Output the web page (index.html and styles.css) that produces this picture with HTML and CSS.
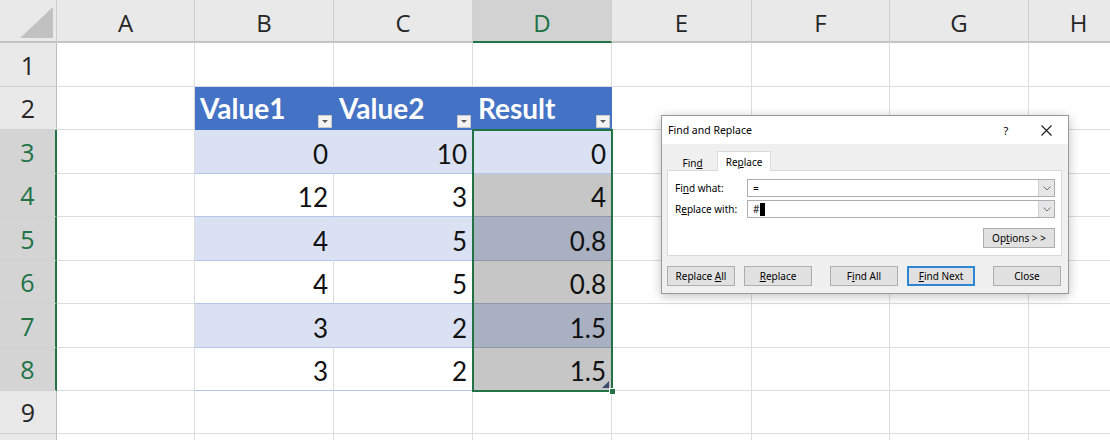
FILE: index.html
```html
<!DOCTYPE html>
<html lang="en">
<head>
    <meta charset="UTF-8">
    <title>Find and Replace</title>
    <link rel="stylesheet" href="styles.css">
</head>
<body>
<div class="sheet">
    <div class="grid">
        <!-- column headers -->
        <div class="ch corner"><span class="tri"></span></div>
        <div class="ch">A</div>
        <div class="ch">B</div>
        <div class="ch">C</div>
        <div class="ch sel">D</div>
        <div class="ch">E</div>
        <div class="ch">F</div>
        <div class="ch">G</div>
        <div class="ch">H</div>

        <!-- row 1 -->
        <div class="rh">1</div>
        <div></div><div></div><div></div><div></div><div></div><div></div><div></div><div></div>

        <!-- row 2: table header -->
        <div class="rh">2</div>
        <div></div>
        <div class="th">Value1<span class="flt"></span></div>
        <div class="th">Value2<span class="flt"></span></div>
        <div class="th">Result<span class="flt"></span></div>
        <div></div><div></div><div></div><div></div>

        <!-- row 3 -->
        <div class="rh sel">3</div>
        <div></div>
        <div class="num band">0</div>
        <div class="num band">10</div>
        <div class="num band">0</div>
        <div></div><div></div><div></div><div></div>

        <!-- row 4 -->
        <div class="rh sel">4</div>
        <div></div>
        <div class="num plain">12</div>
        <div class="num plain">3</div>
        <div class="num shade">4</div>
        <div></div><div></div><div></div><div></div>

        <!-- row 5 -->
        <div class="rh sel">5</div>
        <div></div>
        <div class="num band">4</div>
        <div class="num band">5</div>
        <div class="num shade-band">0.8</div>
        <div></div><div></div><div></div><div></div>

        <!-- row 6 -->
        <div class="rh sel">6</div>
        <div></div>
        <div class="num plain">4</div>
        <div class="num plain">5</div>
        <div class="num shade">0.8</div>
        <div></div><div></div><div></div><div></div>

        <!-- row 7 -->
        <div class="rh sel">7</div>
        <div></div>
        <div class="num band">3</div>
        <div class="num band">2</div>
        <div class="num shade-band">1.5</div>
        <div></div><div></div><div></div><div></div>

        <!-- row 8 -->
        <div class="rh sel">8</div>
        <div></div>
        <div class="num plain">3</div>
        <div class="num plain">2</div>
        <div class="num shade last">1.5<span class="tbl-corner"></span></div>
        <div></div><div></div><div></div><div></div>

        <!-- row 9 -->
        <div class="rh">9</div>
        <div></div><div></div><div></div><div></div><div></div><div></div><div></div><div></div>

        <!-- row 10 (cut off) -->
        <div class="rh"></div>
        <div></div><div></div><div></div><div></div><div></div><div></div><div></div><div></div>
    </div>

    <div class="selection"><span class="handle"></span></div>

    <div class="dlg">
        <div class="dlg-title">
            <span class="dlg-name">Find and Replace</span>
            <span class="help">?</span>
            <span class="close-x">
                <svg width="11" height="11" viewBox="0 0 11 11"><path d="M0.5 0.5 L10.5 10.5 M10.5 0.5 L0.5 10.5" stroke="#1a1a1a" stroke-width="1.1" fill="none"/></svg>
            </span>
        </div>
        <div class="tabs">
            <span class="tab"><span>Fin<u>d</u></span></span>
            <span class="tab on"><span>Re<u>p</u>lace</span></span>
        </div>
        <div class="panel">
            <div class="field">
                <span class="lbl">Fi<u>n</u>d what:</span>
                <span class="combo"><span class="val">=</span><span class="drop"><svg width="8" height="5" viewBox="0 0 8 5"><path d="M0.5 0.5 L4 4 L7.5 0.5" stroke="#707070" fill="none"/></svg></span></span>
            </div>
            <div class="field">
                <span class="lbl">R<u>e</u>place with:</span>
                <span class="combo"><span class="val">#<span class="caret"></span></span><span class="drop"><svg width="8" height="5" viewBox="0 0 8 5"><path d="M0.5 0.5 L4 4 L7.5 0.5" stroke="#707070" fill="none"/></svg></span></span>
            </div>
            <div class="opt-row">
                <span class="btn opt"><span>Op<u>t</u>ions &gt; &gt;</span></span>
            </div>
        </div>
        <div class="btn-row">
            <span class="btn"><span>Replace <u>A</u>ll</span></span>
            <span class="btn gap-s"><span><u>R</u>eplace</span></span>
            <span class="btn gap-l"><span>F<u>i</u>nd All</span></span>
            <span class="btn gap-s default"><span><u>F</u>ind Next</span></span>
            <span class="btn gap-l"><span>Close</span></span>
        </div>
    </div>
</div>
</body>
</html>
```

FILE: styles.css
```css
body {
    margin: 0;
    background: #fff;
    font-family: "Open Sans", sans-serif;
    overflow: hidden;
}
.sheet {
    position: relative;
    width: 1110px;
    height: 440px;
    overflow: hidden;
}
.grid {
    display: grid;
    grid-template-columns: 57px 138px 139px 139px 139px 140px 138px 139px 100px;
    grid-template-rows: 43px 44px 43px 44px 43px 44px 43px 44px 43px 43px 10px;
}
.grid > div {
    box-sizing: border-box;
    border-right: 1px solid #dadcdd;
    border-bottom: 1px solid #dadcdd;
    display: flex;
    align-items: center;
}

/* headers */
.grid > .ch {
    background: #e9e9e9;
    justify-content: center;
    font-size: 24px;
    color: #262626;
    padding-top: 4px;
    border-right-color: #d0d0d0;
    border-bottom: 2px solid #c4c4c4;
}
.grid > .ch.sel {
    background: #d2d2d2;
    color: #217346;
    border-bottom: 2px solid #217346;
}
.grid > .corner {
    justify-content: flex-end;
    align-items: flex-end;
    padding: 0 3px 3px 0;
}
.tri {
    width: 0;
    height: 0;
    border-left: 33px solid transparent;
    border-bottom: 31px solid #c1c1c1;
}
.grid > .rh {
    background: #e9e9e9;
    justify-content: center;
    font-size: 25px;
    color: #262626;
    border-right-color: #bdbdbd;
    border-bottom-color: #d0d0d0;
}
.grid > .rh.sel {
    background: #d4d4d4;
    color: #217346;
    border-right: 2px solid #217346;
}

/* table */
.grid > .th {
    background: #4472c4;
    color: #fff;
    font-family: Lato, sans-serif;
    font-weight: 700;
    font-size: 28px;
    padding-left: 5px;
    justify-content: space-between;
    border-right-color: #4472c4;
    border-bottom-color: #4472c4;
}
.flt {
    align-self: flex-end;
    position: relative;
    width: 14px;
    height: 13px;
    margin: 0 1px 1px 0;
    box-sizing: border-box;
    background: #f3f3f3;
    border: 1px solid #c9c9c9;
}
.flt::after {
    content: "";
    position: absolute;
    left: 3px;
    top: 4px;
    border-top: 3px solid #555;
    border-left: 3px solid transparent;
    border-right: 3px solid transparent;
}
.grid > .num {
    justify-content: flex-end;
    padding: 4px 5px 0 0;
    font-family: Lato, sans-serif;
    font-size: 26px;
    color: #111;
}
.grid > .band {
    background: #d9e1f2;
    border-right-color: #d9e1f2;
    border-bottom-color: #b4c6e7;
}
.grid > .plain {
    border-bottom-color: #b4c6e7;
}
.grid > .shade {
    background: #c6c6c6;
    border-bottom-color: #8f98ab;
}
.grid > .shade-band {
    background: #a9b0c1;
    border-bottom-color: #8f98ab;
}
.grid > .last {
    position: relative;
}
.tbl-corner {
    position: absolute;
    right: 2px;
    bottom: 2px;
    border-left: 7px solid transparent;
    border-bottom: 7px solid #3d4a6d;
}

.selection {
    position: absolute;
    left: 472px;
    top: 129px;
    width: 141px;
    height: 263px;
    box-sizing: border-box;
    border: 2px solid #217346;
}
.handle {
    position: absolute;
    right: -5px;
    bottom: -5px;
    width: 7px;
    height: 7px;
    box-sizing: border-box;
    background: #217346;
    border: 1px solid #fff;
}

/* dialog */
.dlg {
    position: absolute;
    left: 661px;
    top: 115px;
    width: 408px;
    height: 179px;
    box-sizing: border-box;
    border: 1px solid #999;
    background: #f0f0f0;
    box-shadow: 0 2px 10px rgba(0, 0, 0, 0.25);
    font-family: "Noto Sans", sans-serif;
    font-size: 10px;
    color: #000;
    display: flex;
    flex-direction: column;
}
.dlg-title {
    height: 28px;
    background: #fff;
    display: flex;
    align-items: center;
    padding-left: 6px;
    font-size: 10.5px;
}
.dlg-name {
    flex: 1;
}
.help {
    width: 36px;
    text-align: center;
    font-size: 11px;
}
.close-x {
    width: 44px;
    display: flex;
    justify-content: center;
}
.tabs {
    display: flex;
    align-items: flex-end;
    height: 20px;
    margin: 7px 0 0 6px;
}
.tab {
    width: 49px;
    height: 16px;
    display: flex;
    justify-content: center;
    align-items: center;
}
.tab.on {
    position: relative;
    width: 54px;
    height: 20px;
    box-sizing: border-box;
    background: #fff;
    border: 1px solid #d9d9d9;
    border-bottom: none;
    padding-top: 1px;
}
.panel {
    height: 86px;
    margin: -1px 6px 0 5px;
    box-sizing: border-box;
    background: #fff;
    border: 1px solid #d9d9d9;
    padding: 8px 6px 0 7px;
}
.field {
    display: flex;
    align-items: center;
    height: 18px;
    margin-bottom: 3px;
}
.lbl {
    width: 72px;
}
.combo {
    flex: 1;
    height: 18px;
    box-sizing: border-box;
    border: 1px solid #abadb3;
    display: flex;
    align-items: center;
}
.val {
    flex: 1;
    padding-left: 5px;
    display: flex;
    align-items: center;
}
.caret {
    display: inline-block;
    width: 5px;
    height: 13px;
    margin-left: 1px;
    background: #000;
}
.drop {
    width: 15px;
    height: 16px;
    background: #e6e6e6;
    border-left: 1px solid #cfcfcf;
    display: flex;
    justify-content: center;
    align-items: center;
}
.opt-row {
    display: flex;
    justify-content: flex-end;
    margin-top: 10px;
}
.btn {
    width: 68px;
    height: 20px;
    box-sizing: border-box;
    background: #e1e1e1;
    border: 1px solid #adadad;
    display: flex;
    justify-content: center;
    align-items: center;
}
.btn.opt {
    width: 72px;
}
.btn-row {
    display: flex;
    margin: 10px 0 0 5px;
}
.gap-s {
    margin-left: 9px;
}
.gap-l {
    margin-left: 18px;
}
.btn.default {
    border: 2px solid #2f86d4;
}
```
